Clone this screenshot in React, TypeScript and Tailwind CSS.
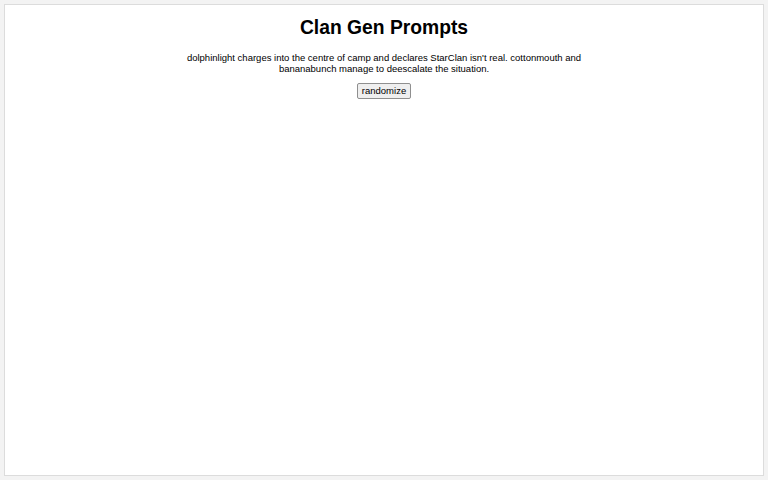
import React, { useState } from 'react';

const prompts = [
  "dolphinlight charges into the centre of camp and declares StarClan isn't real. cottonmouth and bananabunch manage to deescalate the situation.",
];

export default function App() {
  const [prompt, setPrompt] = useState(prompts[0]);

  return (
    <div className="h-[480px] bg-[#f3f3f3] p-[4px] font-['Liberation_Sans',Arial,sans-serif]">
      <div className="h-full bg-white border border-[#dcdcdc] flex flex-col items-center">
        <h1 className="mt-[12px] text-[19.3px] leading-[22px] font-bold text-black">Clan Gen Prompts</h1>
        <p className="mt-[13px] max-w-[410px] text-center text-[9.5px] leading-[11px] text-black">{prompt}</p>
        <button
          onClick={() => setPrompt(prompts[Math.floor(Math.random() * prompts.length)])}
          className="mt-[9px] h-[16px] px-[4px] text-[9.5px] leading-[12px] text-black bg-[#efefef] border border-[#8f8f8f] rounded-[2px]"
        >
          randomize
        </button>
      </div>
    </div>
  );
}
